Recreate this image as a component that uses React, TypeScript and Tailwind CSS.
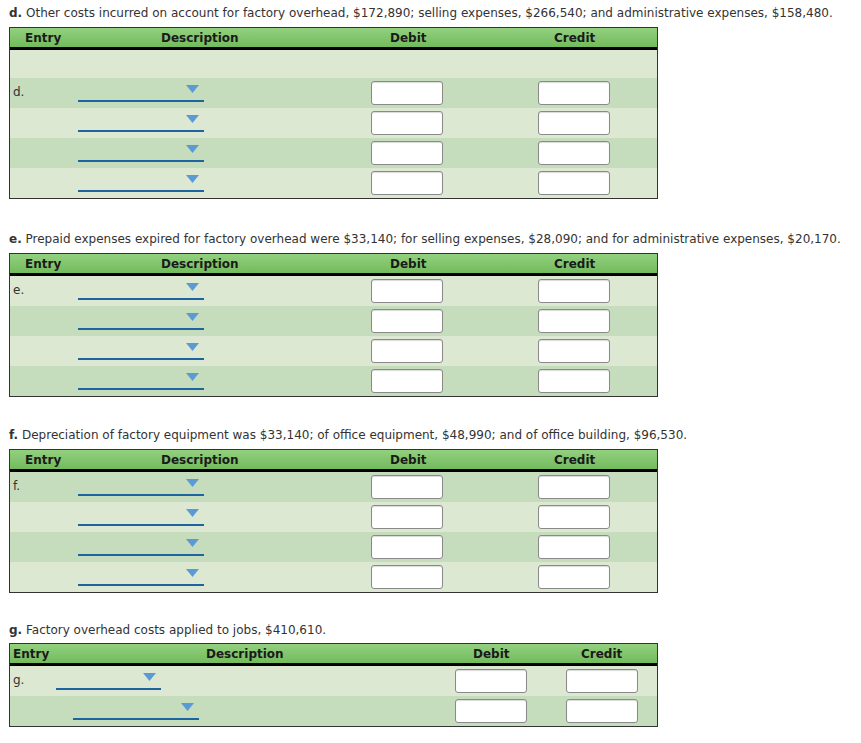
import React from "react";

const F = { fontFamily: '"DejaVu Sans", Verdana, sans-serif' };

function Input() {
  return <div className="w-[72px] h-[24px] bg-white border border-[#8a8a8a] rounded-[3px] shadow-[inset_0_1px_1px_rgba(0,0,0,0.15)]" />;
}

function Dropdown({ w = 126 }: { w?: number }) {
  return (
    <div className="relative h-[22px] border-b-2 border-[#1e64a0]" style={{ width: w }}>
      <svg className="absolute right-[5px] top-[5px]" width="13" height="8" viewBox="0 0 13 8">
        <polygon points="0,0 13,0 6.5,8" fill="#5a9bd5" />
      </svg>
    </div>
  );
}

function Row({ label, dark, indent = 0 }: { label?: string; dark: boolean; indent?: number }) {
  return (
    <div className={`flex h-[30px] items-start ${dark ? "bg-[#c5dcbd]" : "bg-[#dde8d2]"}`}>
      <div className="w-[68px] pl-[3px] pt-[5px] text-[12px] text-[#333]">{label}</div>
      <div className="w-[293px] pt-[2px]" style={{ paddingLeft: indent }}><Dropdown /></div>
      <div className="w-[167px] pt-[3px]"><Input /></div>
      <div className="pt-[3px]"><Input /></div>
    </div>
  );
}

function Header() {
  return (
    <div className="flex h-[22px] items-center border-b-[3px] border-black bg-gradient-to-b from-[#93d07f] to-[#72bb5c] text-[12px] font-bold text-[#1a1a1a]">
      <span className="ml-[15px] w-[136px]">Entry</span>
      <span className="w-[229px]">Description</span>
      <span className="w-[164px]">Debit</span>
      <span>Credit</span>
    </div>
  );
}

function Section({ letter, text, labelDark, blank = false }: { letter: string; text: string; labelDark: boolean; blank?: boolean }) {
  const d = [labelDark, !labelDark, labelDark, !labelDark];
  return (
    <div>
      <p className="text-[12px] text-[#333] h-[16px] leading-[16px]"><b>{letter}.</b> {text}</p>
      <div className="mt-[6px] w-[649px] border border-[#333]">
        <Header />
        {blank && <div className="h-[28px] bg-[#dde8d2]" />}
        {d.map((dk, i) => <Row key={i} dark={dk} label={i === 0 ? `${letter}.` : undefined} />)}
      </div>
    </div>
  );
}

export default function App() {
  return (
    <div className="w-[861px] bg-white pl-[9px] pt-[5px]" style={F}>
      <Section letter="d" blank labelDark text="Other costs incurred on account for factory overhead, $172,890; selling expenses, $266,540; and administrative expenses, $158,480." />
      <div className="h-[32px]" />
      <Section letter="e" labelDark={false} text="Prepaid expenses expired for factory overhead were $33,140; for selling expenses, $28,090; and for administrative expenses, $20,170." />
      <div className="h-[30px]" />
      <Section letter="f" labelDark text="Depreciation of factory equipment was $33,140; of office equipment, $48,990; and of office building, $96,530." />
      <div className="h-[29px]" />
      <div>
        <p className="text-[12px] text-[#333] h-[16px] leading-[16px]"><b>g.</b> Factory overhead costs applied to jobs, $410,610.</p>
        <div className="mt-[5px] w-[649px] border border-[#333]">
          <div className="flex h-[22px] items-center border-b-[3px] border-black bg-gradient-to-b from-[#93d07f] to-[#72bb5c] text-[12px] font-bold text-[#1a1a1a]">
            <span className="ml-[3px] w-[193px]">Entry</span>
            <span className="w-[267px]">Description</span>
            <span className="w-[108px]">Debit</span>
            <span>Credit</span>
          </div>
          {[0, 1].map((i) => (
            <div key={i} className={`flex h-[30px] items-start ${i ? "bg-[#c5dcbd]" : "bg-[#dde8d2]"}`}>
              <div className="w-[46px] pl-[3px] pt-[5px] text-[12px] text-[#333]">{i ? "" : "g."}</div>
              <div className="w-[399px] pt-[2px]" style={{ paddingLeft: i ? 17 : 0 }}><Dropdown w={i ? 126 : 105} /></div>
              <div className="w-[111px] pt-[3px]"><Input /></div>
              <div className="pt-[3px]"><Input /></div>
            </div>
          ))}
        </div>
      </div>
    </div>
  );
}
